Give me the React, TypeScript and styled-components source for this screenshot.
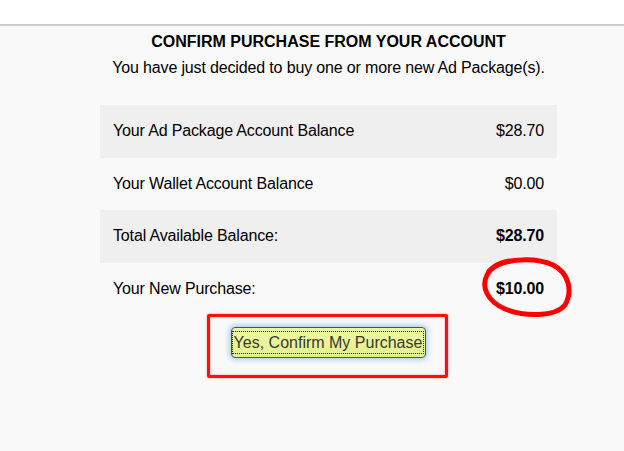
import React from 'react';
import styled, { createGlobalStyle } from 'styled-components';

// Types
interface BalanceRow {
    label: string;
    value: string;
    bold?: boolean;
    circled?: boolean;
}

interface RowProps {
    $shaded: boolean;
}

interface ValueProps {
    $bold: boolean;
}

// Data
const ROWS: BalanceRow[] = [
    { label: 'Your Ad Package Account Balance', value: '$28.70' },
    { label: 'Your Wallet Account Balance', value: '$0.00' },
    { label: 'Total Available Balance:', value: '$28.70', bold: true },
    { label: 'Your New Purchase:', value: '$10.00', bold: true, circled: true }
];

const GlobalStyle = createGlobalStyle`
  html, body {
    margin: 0;
    padding: 0;
    background: #f9f9f9;
    font-family: "Liberation Sans", Arial, sans-serif;
    color: #000;
  }
`;

// Styled Components
const TopStrip = styled.div`
  height: 24px;
  background: #ffffff;
  border-bottom: 2px solid #cfcfcf;
`;

const Page = styled.div`
  min-height: 425px;
  background: #f9f9f9;
  overflow: hidden;
`;

const Content = styled.div`
  width: 457px;
  margin-left: 100px;
  display: flex;
  flex-direction: column;
  align-items: stretch;
`;

const Title = styled.h1`
  margin: 6px 0 0;
  font-size: 16px;
  line-height: 19px;
  font-weight: 700;
  text-align: center;
`;

const Subtitle = styled.p`
  margin: 7px 0 0;
  font-size: 16px;
  line-height: 19px;
  text-align: center;
  letter-spacing: -0.15px;
`;

const Table = styled.div`
  margin-top: 28px;
  display: flex;
  flex-direction: column;
`;

const Row = styled.div<RowProps>`
  height: 52.5px;
  display: flex;
  align-items: center;
  justify-content: space-between;
  padding: 0 13px;
  background: ${props => (props.$shaded ? '#efefef' : 'transparent')};
  font-size: 16px;
  letter-spacing: -0.15px;
`;

const Value = styled.span<ValueProps>`
  position: relative;
  font-weight: ${props => (props.$bold ? 700 : 400)};
`;

const Circle = styled.svg`
  position: absolute;
  left: -15px;
  top: -23px;
  width: 90px;
  height: 62px;
  pointer-events: none;
  overflow: visible;
`;

const Actions = styled.div`
  display: flex;
  justify-content: center;
  margin-top: -1px;
  padding-right: 3px;
`;

const Highlight = styled.div`
  padding: 10px 19px 17px 21px;
  border: 3px solid #ff1010;
  border-radius: 2px;
  box-shadow: 0 0 2px rgba(255, 0, 0, 0.6), inset 0 0 2px rgba(255, 0, 0, 0.5);
`;

const ConfirmButton = styled.button`
  width: 195px;
  height: 31px;
  padding: 0;
  border: 1px solid #3e5461;
  border-radius: 4px;
  background: linear-gradient(#eef9a6, #e2f08e);
  box-shadow: 0 0 5px 2px rgba(150, 195, 240, 0.75);
  font-family: "Liberation Sans", Arial, sans-serif;
  font-size: 16px;
  color: #3a3a2a;
  cursor: pointer;
  display: flex;
  align-items: center;
  justify-content: center;
`;

const FocusRing = styled.span`
  display: inline-block;
  padding: 1px 1px 0;
  border: 1px dotted #222;
  line-height: 20px;
`;

// Component
const App: React.FC = () => {
    return (
        <>
            <GlobalStyle />
            <TopStrip />
            <Page>
                <Content>
                    <Title>CONFIRM PURCHASE FROM YOUR ACCOUNT</Title>
                    <Subtitle>You have just decided to buy one or more new Ad Package(s).</Subtitle>
                    <Table>
                        {ROWS.map((row, i) => (
                            <Row key={row.label} $shaded={i % 2 === 0}>
                                <span>{row.label}</span>
                                <Value $bold={!!row.bold}>
                                    {row.value}
                                    {row.circled && (
                                        <Circle viewBox="0 0 90 62">
                                            <path
                                                d="M8 14 C 20 2, 52 -1, 72 8 C 88 16, 92 34, 84 48 C 74 60, 44 60, 24 52 C 6 44, 0 30, 6 18 C 10 10, 18 6, 28 4"
                                                fill="none"
                                                stroke="#ff0000"
                                                strokeWidth="5"
                                                strokeLinecap="round"
                                            />
                                        </Circle>
                                    )}
                                </Value>
                            </Row>
                        ))}
                    </Table>
                    <Actions>
                        <Highlight>
                            <ConfirmButton>
                                <FocusRing>Yes, Confirm My Purchase</FocusRing>
                            </ConfirmButton>
                        </Highlight>
                    </Actions>
                </Content>
            </Page>
        </>
    );
};

export default App;
